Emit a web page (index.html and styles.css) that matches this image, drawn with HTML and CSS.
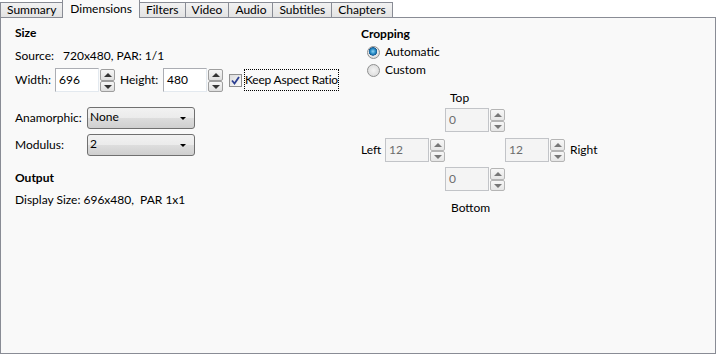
FILE: index.html
```html
<!DOCTYPE html>
<html lang="en">
<head>
    <meta charset="UTF-8">
    <title>Dimensions</title>
    <link rel="stylesheet" href="styles.css">
</head>
<body>
    <div class="tabs">
        <div class="tab">Summary</div>
        <div class="tab active">Dimensions</div>
        <div class="tab">Filters</div>
        <div class="tab">Video</div>
        <div class="tab">Audio</div>
        <div class="tab">Subtitles</div>
        <div class="tab">Chapters</div>
    </div>

    <div class="panel">
        <!-- size / output -->
        <div class="col-left">
            <div class="heading">Size</div>
            <div class="line source"><span class="src-lbl">Source:</span>720x480, PAR: 1/1</div>

            <div class="row size-row">
                <span class="lbl lbl-width">Width:</span>
                <div class="spin">
                    <div class="field">696</div>
                    <div class="arrows"><span class="arr up"></span><span class="arr down"></span></div>
                </div>
                <span class="lbl lbl-height">Height:</span>
                <div class="spin">
                    <div class="field">480</div>
                    <div class="arrows"><span class="arr up"></span><span class="arr down"></span></div>
                </div>
                <div class="check">
                    <span class="box">
                        <svg width="9" height="9" viewBox="0 0 9 9"><path d="M1 4.5 L3.5 7.5 L8 1" fill="none" stroke="#2c3f91" stroke-width="1.8"/></svg>
                    </span>
                    <span class="focus">Keep Aspect Ratio</span>
                </div>
            </div>

            <div class="row combo-row first">
                <span class="lbl lbl-combo">Anamorphic:</span>
                <div class="combo"><span>None</span><span class="caret"></span></div>
            </div>
            <div class="row combo-row">
                <span class="lbl lbl-combo">Modulus:</span>
                <div class="combo"><span>2</span><span class="caret"></span></div>
            </div>

            <div class="heading output">Output</div>
            <div class="line display">Display Size: 696x480,&nbsp; PAR 1x1</div>
        </div>

        <!-- cropping -->
        <div class="col-right">
            <div class="heading crop-head">Cropping</div>
            <div class="radio-line"><span class="radio checked"></span>Automatic</div>
            <div class="radio-line"><span class="radio"></span>Custom</div>

            <div class="crop-grid">
                <div class="crop-top-lbl">Top</div>
                <div class="spin off crop-top">
                    <div class="field">0</div>
                    <div class="arrows"><span class="arr up"></span><span class="arr down"></span></div>
                </div>
                <div class="crop-left-lbl">Left</div>
                <div class="spin off crop-left">
                    <div class="field">12</div>
                    <div class="arrows"><span class="arr up"></span><span class="arr down"></span></div>
                </div>
                <div class="spin off crop-right">
                    <div class="field">12</div>
                    <div class="arrows"><span class="arr up"></span><span class="arr down"></span></div>
                </div>
                <div class="crop-right-lbl">Right</div>
                <div class="spin off crop-bottom">
                    <div class="field">0</div>
                    <div class="arrows"><span class="arr up"></span><span class="arr down"></span></div>
                </div>
                <div class="crop-bottom-lbl">Bottom</div>
            </div>
        </div>
    </div>
</body>
</html>
```

FILE: styles.css
```css
body {
    margin: 0;
    background: #fff;
    font-family: Lato, "Open Sans", sans-serif;
    font-size: 12px;
    line-height: 16px;
    color: #000;
}

/* tab strip */
.tabs {
    display: flex;
    height: 17px;
    align-items: flex-end;
}

.tab {
    height: 14px;
    line-height: 14px;
    padding: 0 6px;
    border: 1px solid #898c95;
    border-bottom: none;
    margin-right: -1px;
    background: linear-gradient(#f2f2f2, #e3e3e3);
}

.tab.active {
    position: relative;
    z-index: 1;
    height: 18px;
    line-height: 17px;
    margin-bottom: -1px;
    background: #f9f9f9;
    padding: 0 7px;
}

.panel {
    display: flex;
    width: 714px;
    height: 335px;
    border: 1px solid #898c95;
    background: #f9f9f9;
}

.col-left {
    width: 346px;
    padding: 7px 0 0 14px;
}

.col-right {
    padding: 8px 0 0 0;
}

.heading {
    font-weight: bold;
}

.line {
    height: 16px;
}

.source {
    margin-top: 7px;
}

.src-lbl {
    display: inline-block;
    width: 48px;
}

.row {
    display: flex;
    align-items: center;
}

.size-row {
    margin-top: 4px;
    height: 24px;
}

.lbl-width { width: 40px; }
.lbl-height { width: 43px; margin-left: 5px; }
.lbl-combo { width: 72px; }

/* spin boxes */
.spin {
    display: flex;
    width: 60px;
    height: 24px;
}

.field {
    width: 39px;
    height: 22px;
    line-height: 22px;
    padding-left: 3px;
    border: 1px solid #abadb3;
    border-right-color: #e3e9ef;
    border-bottom-color: #e3e9ef;
    background: #fff;
}

.arrows {
    display: flex;
    flex-direction: column;
    width: 16px;
    height: 24px;
}

.arr {
    position: relative;
    height: 10px;
    margin: 1px 0 0 1px;
    border: 1px solid #9e9e9e;
    border-radius: 2px;
    background: linear-gradient(#f6f6f6, #dedede);
}

.arr.down { margin-top: 0; }

.arr::after {
    content: "";
    position: absolute;
    left: 3px;
    border-left: 4px solid transparent;
    border-right: 4px solid transparent;
}

.arr.up::after {
    top: 3px;
    border-bottom: 4px solid #333;
}

.arr.down::after {
    top: 3px;
    border-top: 4px solid #333;
}

.spin.off .field {
    background: #f4f4f4;
    border-color: #c2c4c8;
    color: #6d6d6d;
}

.spin.off .arr {
    border-color: #b5b5b5;
    background: linear-gradient(#f7f7f7, #e6e6e6);
}

.spin.off .arr.up::after { border-bottom-color: #777; }
.spin.off .arr.down::after { border-top-color: #777; }

/* checkbox */
.check {
    display: flex;
    align-items: center;
    margin-left: 6px;
}

.box {
    display: flex;
    align-items: center;
    justify-content: center;
    width: 11px;
    height: 11px;
    border: 1px solid #8f8f8f;
    background: linear-gradient(135deg, #dcdcdc, #fbfbfb);
}

.focus {
    margin-left: 2px;
    padding: 2px 0;
    border: 1px dotted #000;
    letter-spacing: -0.2px;
}

/* combos */
.combo-row {
    height: 22px;
    margin-top: 5px;
}

.combo-row.first {
    margin-top: 15px;
}

.combo {
    display: flex;
    justify-content: space-between;
    align-items: flex-start;
    width: 104px;
    height: 20px;
    padding: 0 0 0 2px;
    border: 1px solid #707070;
    border-radius: 3px;
    background: linear-gradient(#f2f2f2 0%, #ebebeb 50%, #dddddd 51%, #cfcfcf 100%);
    line-height: 17px;
}

.caret {
    width: 0;
    height: 0;
    margin: 9px 8px 0 0;
    border-left: 3px solid transparent;
    border-right: 3px solid transparent;
    border-top: 3px solid #000;
}

.output {
    margin-top: 14px;
}

.display {
    margin-top: 6px;
}

/* cropping */
.radio-line {
    display: flex;
    align-items: center;
    height: 16px;
    margin-top: 2px;
    padding-left: 6px;
}

.radio {
    width: 11px;
    height: 11px;
    margin-right: 5px;
    border: 1px solid #8e8f8f;
    border-radius: 50%;
    background: radial-gradient(circle at 50% 50%, #f4f4f4, #d6d6d6);
}

.radio.checked {
    background: radial-gradient(circle at 45% 40%, #8fd3f4 0, #2a8fc8 2.5px, #165a93 4px, #eaeaea 4.5px, #d0d0d0 100%);
}

.crop-grid {
    display: grid;
    grid-template-columns: 24px 60px 60px 60px auto;
    margin-top: 12px;
}

.crop-top-lbl {
    grid-column: 3;
    padding-left: 5px;
}

.crop-top {
    grid-column: 3;
    margin-top: 2px;
}

.crop-left-lbl {
    grid-column: 1;
    margin-top: 6px;
    line-height: 24px;
}

.crop-left {
    grid-column: 2;
    margin-top: 6px;
}

.crop-right {
    grid-column: 4;
    margin-top: 6px;
}

.crop-right-lbl {
    grid-column: 5;
    margin-top: 6px;
    padding-left: 5px;
    line-height: 24px;
}

.crop-bottom {
    grid-column: 3;
    margin-top: 5px;
}

.crop-bottom-lbl {
    grid-column: 3;
    margin-top: 9px;
    padding-left: 6px;
}
```
